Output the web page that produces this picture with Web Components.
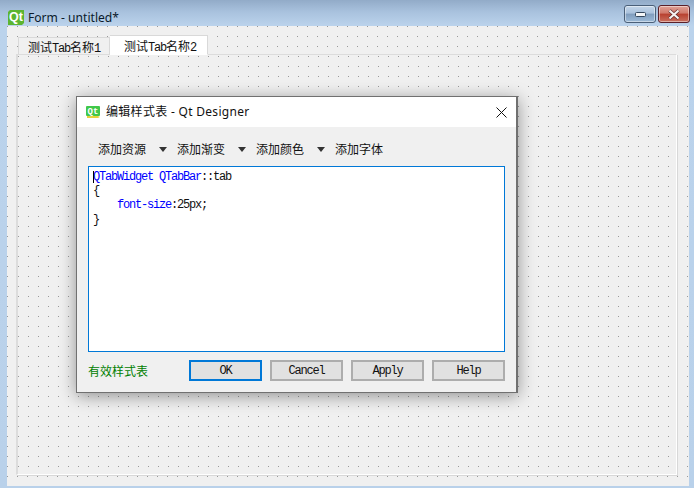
<!DOCTYPE html>
<html>
<head>
<meta charset="utf-8">
<title>Form - untitled*</title>
<style>
  html, body { margin: 0; padding: 0; width: 694px; height: 488px; overflow: hidden; }
  body { font-family: "Noto Sans", "Noto Sans CJK SC", sans-serif; }
  .kw { color: #0000ff; }
  .lat { font: 12px "Liberation Mono", monospace; letter-spacing: -1.2px; }
</style>
</head>
<body>

<qt-window caption="Form - untitled*">
  <qt-tabs>
    <qt-tab>测试<span class="lat">Tab</span>名称<span class="lat">1</span></qt-tab>
    <qt-tab active>测试<span class="lat">Tab</span>名称<span class="lat">2</span></qt-tab>
  </qt-tabs>

  <qt-dialog caption="编辑样式表 - Qt Designer">
    <qt-toolbutton slot="tools" arrow>添加资源</qt-toolbutton>
    <qt-toolbutton slot="tools" arrow>添加渐变</qt-toolbutton>
    <qt-toolbutton slot="tools" arrow>添加颜色</qt-toolbutton>
    <qt-toolbutton slot="tools">添加字体</qt-toolbutton>

    <qt-editor>
      <div><span class="kw">QTabWidget QTabBar</span>::tab</div>
      <div>{</div>
      <div>&nbsp;&nbsp;&nbsp;&nbsp;<span class="kw">font-size</span>:25px;</div>
      <div>}</div>
    </qt-editor>

    <span slot="status">有效样式表</span>
    <qt-button slot="buttons" default>OK</qt-button>
    <qt-button slot="buttons">Cancel</qt-button>
    <qt-button slot="buttons">Apply</qt-button>
    <qt-button slot="buttons">Help</qt-button>
  </qt-dialog>
</qt-window>

<script>
const dots = `conic-gradient(at 1px 1px, transparent 75%, #9a9a9a 0)`;
const qtLogo = (w, h, size) => `
  <svg width="${w}" height="${h}" viewBox="0 0 ${w} ${h}" style="display:block">
    <path d="M2 0H${w}V${h - 2}L${w - 2} ${h}H0V2Z" fill="#5cb531"/>
    <text x="${w / 2}" y="${h - 4}" text-anchor="middle" font-family="Liberation Sans, sans-serif" font-weight="700" font-size="${size}" fill="#fff">Qt</text>
  </svg>`;
// the dialog's icon: green tag on a yellow pencil stripe
const designerLogo = `
  <svg width="14" height="12" viewBox="0 0 14 12" style="display:block">
    <rect width="14" height="10" rx="1" fill="#41c84a"/>
    <path d="M1 10H12L14 11L12 12H1Z" fill="#e6d23c"/>
    <text x="7" y="8" text-anchor="middle" font-family="Liberation Mono, monospace" font-weight="700" font-size="9" fill="#fff">Qt</text>
  </svg>`;

class QtWindow extends HTMLElement {
  constructor() {
    super();
    this.attachShadow({ mode: 'open' });
    this.shadowRoot.innerHTML = `
      <style>
        :host {
          display: flex;
          flex-direction: column;
          box-sizing: border-box;
          width: 694px;
          height: 488px;
          padding: 0 5px 2px 7px;
          background: linear-gradient(#92abc8 0, #a9c2de 12px, #bbd3ec 26px, #b9d1ea 100%);
          position: relative;
        }
        .bar {
          height: 26px;
          flex: none;
          display: flex;
          align-items: flex-start;
        }
        .logo { margin: 10px 0 0 1px; }
        .caption {
          margin: 9px 0 0 4px;
          font: 12.1px/18px "Noto Sans", sans-serif;
          color: #0b1a2b;
        }
        .controls {
          margin: 5px -1px 0 auto;
          display: flex;
          gap: 2px;
        }
        .ctl {
          box-sizing: border-box;
          width: 32px;
          height: 18px;
          border: 1px solid #4a5f78;
          border-radius: 3px;
          box-shadow: inset 0 0 0 1px rgba(255,255,255,.45);
          display: flex;
          align-items: center;
          justify-content: center;
        }
        .min { background: linear-gradient(#c3d5e9 0, #a9c1dc 45%, #7f9cbd 50%, #9dbbd8 100%); }
        .close {
          border-color: #5a1f28;
          background: linear-gradient(#e0a196 0, #d0786a 45%, #b8402f 50%, #c9705f 100%);
        }
        .client {
          flex: 1;
          min-height: 0;
          display: flex;
          box-sizing: border-box;
          padding: 9px 12px 11px 9px;
          background-color: #f0f0f0;
          background-image: ${dots};
          background-size: 10px 10px;
          background-position: 0 0;
          position: relative;
        }
      </style>
      <div class="bar">
        <span class="logo">${qtLogo(16, 15, 12.5)}</span>
        <span class="caption">${this.getAttribute('caption')}</span>
        <div class="controls">
          <div class="ctl min">
            <svg width="11" height="5"><rect x=".5" y=".5" width="10" height="4" rx="1" fill="#f4f6f8" stroke="#33465c"/></svg>
          </div>
          <div class="ctl close">
            <svg width="14" height="11" viewBox="0 0 14 11"><path d="M2.5 1.5L11.5 9.5M11.5 1.5L2.5 9.5" stroke="#5c2a2a" stroke-width="3.6"/><path d="M2.5 1.5L11.5 9.5M11.5 1.5L2.5 9.5" stroke="#f6f3f2" stroke-width="2.2"/></svg>
          </div>
        </div>
      </div>
      <div class="client"><slot></slot></div>`;
  }
}

class QtTabs extends HTMLElement {
  constructor() {
    super();
    this.attachShadow({ mode: 'open' });
    this.shadowRoot.innerHTML = `
      <style>
        :host { flex: 1; display: flex; flex-direction: column; min-width: 0; }
        .strip {
          flex: none;
          height: 20px;
          display: flex;
          align-items: flex-end;
          padding-left: 2px;
          margin-bottom: -1px;
          position: relative;
          z-index: 1;
        }
        .pane {
          flex: 1;
          border: 1px solid #dcdcdc;
          border-left-width: 2px;
          border-right: 1px solid #fff;
          border-bottom: 1px solid #fff;
          box-shadow: 1px 1px 0 #d8d8d8;
          background-color: #f0f0f0;
          background-image: ${dots};
          background-size: 10px 10px;
          background-position: 0 1px;
        }
      </style>
      <div class="strip"><slot></slot></div>
      <div class="pane"></div>`;
  }
}

class QtTab extends HTMLElement {
  constructor() {
    super();
    this.attachShadow({ mode: 'open' });
    this.shadowRoot.innerHTML = `
      <style>
        :host {
          display: block;
          box-sizing: border-box;
          height: 18px;
          padding: 0 9px;
          font: 12px/18px "Noto Sans CJK SC", sans-serif;
          color: #111;
          background: #f0f0f0;
          border: 1px solid #d9d9d9;
          border-bottom-color: #dcdcdc;
          white-space: nowrap;
        }
        :host([active]) {
          height: 20px;
          line-height: 19px;
          padding: 0 11px 0 14px;
          background: #fff;
          border-bottom-color: #fff;
          border-left: none;
        }
      </style>
      <slot></slot>`;
  }
}

class QtDialog extends HTMLElement {
  constructor() {
    super();
    this.attachShadow({ mode: 'open' });
    this.shadowRoot.innerHTML = `
      <style>
        :host {
          position: absolute;
          left: 69px;
          top: 70px;
          width: 442px;
          height: 297px;
          box-sizing: border-box;
          display: flex;
          flex-direction: column;
          border: 1px solid #707070;
          border-right-width: 2px;
          background: #f0f0f0;
          box-shadow: 0 3px 16px rgba(0,0,0,.4);
        }
        .title {
          flex: none;
          height: 30px;
          box-sizing: border-box;
          display: flex;
          align-items: center;
          padding: 0 9px 0 9px;
          background: #fff;
        }
        .caption {
          margin-left: 6px;
          font: 12px/16px "Noto Sans", "Noto Sans CJK SC", sans-serif;
          letter-spacing: .3px;
          color: #111;
        }
        .x { margin-left: auto; display: block; }
        .body {
          flex: 1;
          min-height: 0;
          display: flex;
          flex-direction: column;
          padding: 11px;
        }
        .tools { flex: none; display: flex; height: 28px; padding-left: 10px; }
        .editor { flex: 1; min-height: 0; display: flex; }
        .footer {
          flex: none;
          height: 21px;
          margin-top: 8px;
          display: flex;
          align-items: center;
          justify-content: space-between;
        }
        .status { font: 12px/16px "Noto Sans CJK SC", sans-serif; color: #008000; }
        .buttons { display: flex; gap: 8px; }
      </style>
      <div class="title">
        <span>${designerLogo}</span>
        <span class="caption">${this.getAttribute('caption')}</span>
        <svg class="x" width="11" height="11" viewBox="0 0 11 11"><path d="M.5 .5L10.5 10.5M10.5 .5L.5 10.5" stroke="#111" fill="none"/></svg>
      </div>
      <div class="body">
        <div class="tools"><slot name="tools"></slot></div>
        <div class="editor"><slot></slot></div>
        <div class="footer">
          <span class="status"><slot name="status"></slot></span>
          <div class="buttons"><slot name="buttons"></slot></div>
        </div>
      </div>`;
  }
}

class QtToolButton extends HTMLElement {
  constructor() {
    super();
    this.attachShadow({ mode: 'open' });
    const arrow = this.hasAttribute('arrow')
      ? `<svg class="arrow" width="8" height="5" viewBox="0 0 8 5"><path d="M0 0H8L4 5Z" fill="#333"/></svg>`
      : '';
    this.shadowRoot.innerHTML = `
      <style>
        :host {
          display: flex;
          align-items: center;
          width: 79px;
          flex: none;
          font: 12px/16px "Noto Sans CJK SC", sans-serif;
          color: #111;
          height: 22px;
        }
        .arrow { margin-left: 13px; }
      </style>
      <slot></slot>${arrow}`;
  }
}

class QtEditor extends HTMLElement {
  constructor() {
    super();
    this.attachShadow({ mode: 'open' });
    this.shadowRoot.innerHTML = `
      <style>
        :host {
          flex: 1;
          display: block;
          position: relative;
          box-sizing: border-box;
          border: 1px solid #0078d7;
          background: #fff;
          padding: 3px 4px;
          font: 12px/14.2px "Liberation Mono", monospace;
          letter-spacing: -1.2px;
          color: #111;
        }
        .caret {
          position: absolute;
          left: 4px;
          top: 4px;
          width: 1px;
          height: 12px;
          background: #000;
        }
      </style>
      <span class="caret"></span>
      <slot></slot>`;
  }
}

class QtButton extends HTMLElement {
  constructor() {
    super();
    this.attachShadow({ mode: 'open' });
    this.shadowRoot.innerHTML = `
      <style>
        :host {
          display: flex;
          align-items: center;
          justify-content: center;
          box-sizing: border-box;
          width: 73px;
          height: 21px;
          padding-top: 1px;
          border: 2px solid #adadad;
          background: #e1e1e1;
          font: 12px/14px "Liberation Mono", monospace;
          letter-spacing: -1.2px;
          color: #111;
        }
        :host([default]) { border-color: #0078d7; }
      </style>
      <slot></slot>`;
  }
}

customElements.define('qt-window', QtWindow);
customElements.define('qt-tabs', QtTabs);
customElements.define('qt-tab', QtTab);
customElements.define('qt-dialog', QtDialog);
customElements.define('qt-toolbutton', QtToolButton);
customElements.define('qt-editor', QtEditor);
customElements.define('qt-button', QtButton);
</script>
</body>
</html>
